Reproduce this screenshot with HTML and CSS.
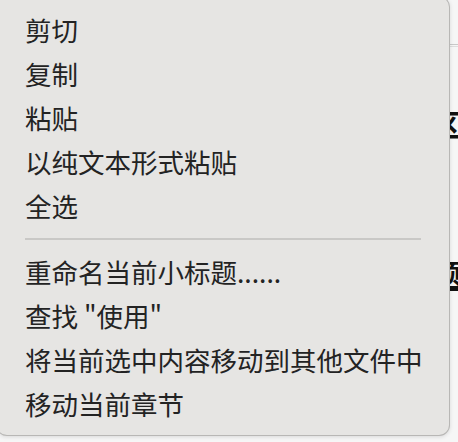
FILE: index.html
```html
<!DOCTYPE html>
<html lang="zh-CN">
<head>
<meta charset="utf-8">
<title>Context menu</title>
<link rel="stylesheet" href="styles.css">
</head>
<body>
<div class="doc">
  <div class="doc-rule"></div>
  <div class="doc-line doc-line-a">使用区</div>
  <div class="doc-line doc-line-b">小标题</div>
</div>
<div class="menu">
  <div class="item">剪切</div>
  <div class="item">复制</div>
  <div class="item">粘贴</div>
  <div class="item">以纯文本形式粘贴</div>
  <div class="item">全选</div>
  <div class="sep"></div>
  <div class="item">重命名当前小标题......</div>
  <div class="item">查找 "使用"</div>
  <div class="item">将当前选中内容移动到其他文件中</div>
  <div class="item">移动当前章节</div>
</div>
</body>
</html>
```

FILE: styles.css
```css
html, body {
  margin: 0;
  padding: 0;
}
body {
  width: 458px;
  height: 442px;
  overflow: hidden;
  position: relative;
  background: #f6f6f6;
  font-family: "Noto Sans CJK SC", "Noto Sans", sans-serif;
}
.doc {
  padding-top: 44px;
}
.doc-rule {
  height: 1px;
  border-top: 1px solid #c9c9c9;
  border-bottom: 1px solid #dddddd;
}
.doc-line {
  text-align: right;
  margin-right: -3px;
  font-weight: 700;
  font-size: 30px;
  line-height: 40px;
  color: #111;
}
.doc-line-a {
  margin-top: 56px;
}
.doc-line-b {
  margin-top: 110px;
  text-decoration: underline;
}
.menu {
  position: absolute;
  left: -4px;
  top: -4px;
  width: 454px;
  box-sizing: border-box;
  padding: 11px 0 9px;
  background: #e6e5e3;
  border: 1px solid rgba(0, 0, 0, 0.2);
  border-radius: 11px;
  box-shadow: 0 1px 4px rgba(0, 0, 0, 0.12);
}
.item {
  height: 44px;
  line-height: 44px;
  padding: 0 0 0 28px;
  font-size: 26.5px;
  color: #232323;
  white-space: nowrap;
}
.sep {
  height: 2px;
  margin: 10px 28px;
  background: #c9c8c6;
}
```
